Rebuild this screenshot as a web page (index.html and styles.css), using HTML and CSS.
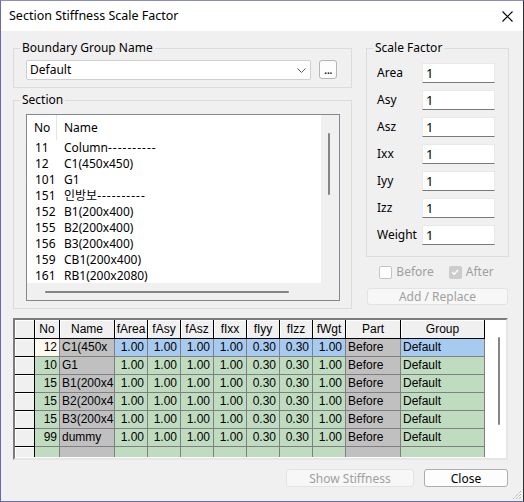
FILE: index.html
```html
<!DOCTYPE html>
<html>
<head>
	<meta charset="UTF-8">
	<title>Section Stiffness Scale Factor</title>
	<link rel="stylesheet" href="styles.css">
</head>
<body>
	<div class="win">
		<div class="titlebar">
			<span class="title">Section Stiffness Scale Factor</span>
			<svg class="close-x" width="11" height="11" viewBox="0 0 11 11"><path d="M0.5 0.5L10.5 10.5M10.5 0.5L0.5 10.5" stroke="#000" stroke-width="1.1" fill="none"/></svg>
		</div>
		<div class="content">
			<div class="top">
				<div class="leftcol">
					<fieldset class="group">
						<legend>Boundary Group Name</legend>
						<div class="gbody bnd">
							<div class="combo">
								<span>Default</span>
								<svg width="9" height="5" viewBox="0 0 9 5"><path d="M0.5 0.5L4.5 4.5L8.5 0.5" stroke="#5a5a5a" fill="none"/></svg>
							</div>
							<button class="more">...</button>
						</div>
					</fieldset>
					<fieldset class="group sect">
						<legend>Section</legend>
						<div class="gbody">
							<div class="listbox">
								<div class="listview">
									<div class="lhead"><span class="lno">No</span><span class="lname">Name</span></div>
									<div class="lrow"><span class="lno">11</span><span class="lname">Column<span class="dash">----------</span></span></div>
									<div class="lrow"><span class="lno">12</span><span class="lname">C1(450x450)</span></div>
									<div class="lrow"><span class="lno">101</span><span class="lname">G1</span></div>
									<div class="lrow"><span class="lno">151</span><span class="lname">인방보<span class="dash">----------</span></span></div>
									<div class="lrow"><span class="lno">152</span><span class="lname">B1(200x400)</span></div>
									<div class="lrow"><span class="lno">155</span><span class="lname">B2(200x400)</span></div>
									<div class="lrow"><span class="lno">156</span><span class="lname">B3(200x400)</span></div>
									<div class="lrow"><span class="lno">159</span><span class="lname">CB1(200x400)</span></div>
									<div class="lrow"><span class="lno">161</span><span class="lname">RB1(200x2080)</span></div>
								</div>
								<div class="vscroll"><i></i></div>
								<div class="hscroll"><i></i></div>
								<div class="corner"></div>
							</div>
						</div>
					</fieldset>
				</div>
				<div class="rightcol">
					<fieldset class="group">
						<legend>Scale Factor</legend>
						<div class="gbody factors">
							<div class="frow"><label>Area</label><input type="text" value="1"></div>
							<div class="frow"><label>Asy</label><input type="text" value="1"></div>
							<div class="frow"><label>Asz</label><input type="text" value="1"></div>
							<div class="frow"><label>Ixx</label><input type="text" value="1"></div>
							<div class="frow"><label>Iyy</label><input type="text" value="1"></div>
							<div class="frow"><label>Izz</label><input type="text" value="1"></div>
							<div class="frow"><label>Weight</label><input type="text" value="1"></div>
						</div>
					</fieldset>
					<div class="checks">
						<span class="chk"><i class="box"></i>Before</span>
						<span class="chk"><i class="box on"><svg width="10" height="10" viewBox="0 0 10 10"><path d="M2 5.2L4.2 7.3L8.2 2.8" stroke="#fff" stroke-width="1.3" fill="none"/></svg></i>After</span>
					</div>
					<button class="btn add" disabled>Add / Replace</button>
				</div>
			</div>
			<div class="gridbox">
				<div class="grid">
					<div class="grow ghead">
						<span></span><span>No</span><span>Name</span><span>fArea</span><span>fAsy</span><span>fAsz</span><span>fIxx</span><span>fIyy</span><span>fIzz</span><span>fWgt</span><span>Part</span><span>Group</span>
					</div>
					<div class="grow sel">
						<span class="rh"></span><span class="no">12</span><span class="nm">C1(450x</span><span>1.00</span><span>1.00</span><span>1.00</span><span>1.00</span><span>0.30</span><span>0.30</span><span>1.00</span><span class="pt">Before</span><span class="gp">Default</span>
					</div>
					<div class="grow">
						<span class="rh"></span><span class="no">10</span><span class="nm">G1</span><span>1.00</span><span>1.00</span><span>1.00</span><span>1.00</span><span>0.30</span><span>0.30</span><span>1.00</span><span class="pt">Before</span><span class="gp">Default</span>
					</div>
					<div class="grow">
						<span class="rh"></span><span class="no">15</span><span class="nm">B1(200x4</span><span>1.00</span><span>1.00</span><span>1.00</span><span>1.00</span><span>0.30</span><span>0.30</span><span>1.00</span><span class="pt">Before</span><span class="gp">Default</span>
					</div>
					<div class="grow">
						<span class="rh"></span><span class="no">15</span><span class="nm">B2(200x4</span><span>1.00</span><span>1.00</span><span>1.00</span><span>1.00</span><span>0.30</span><span>0.30</span><span>1.00</span><span class="pt">Before</span><span class="gp">Default</span>
					</div>
					<div class="grow">
						<span class="rh"></span><span class="no">15</span><span class="nm">B3(200x4</span><span>1.00</span><span>1.00</span><span>1.00</span><span>1.00</span><span>0.30</span><span>0.30</span><span>1.00</span><span class="pt">Before</span><span class="gp">Default</span>
					</div>
					<div class="grow">
						<span class="rh"></span><span class="no">99</span><span class="nm">dummy</span><span>1.00</span><span>1.00</span><span>1.00</span><span>1.00</span><span>0.30</span><span>0.30</span><span>1.00</span><span class="pt">Before</span><span class="gp">Default</span>
					</div>
					<div class="grow">
						<span class="rh"></span><span class="no"></span><span class="nm"></span><span></span><span></span><span></span><span></span><span></span><span></span><span></span><span class="pt"></span><span class="gp"></span>
					</div>
				</div>
				<div class="gscroll"><i></i></div>
			</div>
			<div class="bottom">
				<button class="btn" disabled>Show Stiffness</button>
				<button class="btn close-btn">Close</button>
			</div>
		</div>
		<svg class="grip" width="11" height="11" viewBox="0 0 11 11"><path d="M10 2L2 10M10 5L5 10M10 8L8 10" stroke="#a0a0a0" stroke-dasharray="1 1" fill="none"/></svg>
	</div>
</body>
</html>
```

FILE: styles.css
```css
*{margin: 0;padding: 0;box-sizing: border-box;}
body{background: #f0f0f0;font-family: "Noto Sans", "Noto Sans CJK KR", sans-serif;font-size: 12px;color: #000;}
.win{width: 524px;height: 502px;position: relative;background: #f0f0f0;border: 1px solid;border-color: #8c8cc0 #2e2e2e #6a6aa8 #6868b4;}

.titlebar{height: 30px;background: #fff;display: flex;align-items: center;justify-content: space-between;padding: 0 10px 0 8px;}
.title{font-size: 12.5px;line-height: 16px;}
.close-x{display: block;}

.content{padding: 9px 14px 0 12px;}
.top{display: flex;gap: 14px;}
.leftcol{width: 339px;}
.rightcol{width: 143px;display: flex;flex-direction: column;}

/* group boxes */
.group{border: 1px solid #dcdcdc;padding: 0;margin: 0;min-width: 0;}
.group legend{margin-left: 6px;padding: 0 2px;line-height: 16px;}
.sect{margin-top: 4px;}
.gbody{padding: 4px 11px 7px 12px;}
.sect .gbody{padding-top: 6px;}

.bnd{display: flex;gap: 8px;}
.combo{width: 285px;height: 20px;background: #fff;border: 1px solid #cfcfcf;border-radius: 2px;display: flex;align-items: center;justify-content: space-between;padding: 0 4px 0 3px;line-height: 16px;}
.more{width: 18px;height: 19px;background: #fdfdfd;border: 1px solid #b5b5b5;border-radius: 3px;font: inherit;line-height: 14px;text-align: center;letter-spacing: -0.5px;}

/* section list */
.listbox{width: 314px;height: 187px;border: 1px solid #828790;display: grid;grid-template-columns: 1fr 18px;grid-template-rows: 1fr 17px;}
.listview{background: #fff;overflow: hidden;}
.lhead{height: 25px;display: flex;align-items: center;}
.lhead .lno{border-right: 1px solid #e5e5e5;height: 25px;line-height: 25px;}
.lrow{height: 16px;line-height: 16px;display: flex;}
.lno{width: 30px;padding-left: 7px;}
.lrow .lno{padding-left: 8px;}
.lname{padding-left: 7px;white-space: nowrap;}
.dash{letter-spacing: 1px;}
.vscroll,.hscroll,.corner{background: #f0f0f0;}
.vscroll i{display: block;width: 2px;height: 62px;margin: 18px 0 0 7px;background: #858585;border-radius: 1px;}
.hscroll i{display: block;height: 2px;width: 244px;margin: 8px 0 0 18px;background: #858585;border-radius: 1px;}

/* scale factors */
.factors{padding: 7px 13px 11px 10px;display: flex;flex-direction: column;gap: 7px;}
.frow{display: flex;align-items: center;height: 20px;}
.frow label{width: 45px;line-height: 16px;}
.frow input{width: 73px;height: 20px;border: 1px solid #e8e8e8;border-bottom-color: #7a7a7a;background: #fff;font: 13px "Noto Sans", sans-serif;padding: 0 3px;outline: none;}

.checks{display: flex;justify-content: center;gap: 15px;margin-top: 7px;height: 16px;line-height: 16px;color: #a0a0a0;padding-right: 2px;}
.chk{display: flex;align-items: center;gap: 4px;}
.box{width: 13px;height: 13px;border: 1px solid #c4c4c4;border-radius: 2px;background: #fff;display: flex;align-items: center;justify-content: center;}
.box.on{background: #cccccc;border-color: #cccccc;}
.box svg{display: block;}

.btn{height: 18px;background: #fdfdfd;border: 1px solid #adadad;border-radius: 3px;font: inherit;line-height: 15px;color: #000;}
.btn:disabled{background: #f7f7f7;border-color: #e3e3e3;color: #a0a0a0;}
.add{margin: 8px 1px 0 1px;height: 17px;}

/* grid */
.gridbox{width: 495px;height: 142px;margin-top: 9px;background: #fff;border: 2px solid;border-color: #7c7c7c #e6e6e6 #e6e6e6 #7c7c7c;display: flex;}
.grid{width: 470px;height: 137px;overflow: hidden;font-family: "Liberation Sans", Arial, sans-serif;font-size: 12px;}
.grow{display: grid;grid-template-columns: 20px 25px 55px repeat(7, 33px) 55px 84px;height: 18px;}
.grow span{height: 18px;line-height: 17px;border-right: 1px solid #808080;border-bottom: 1px solid #808080;background: #c0dcc0;text-align: right;padding-right: 3px;white-space: nowrap;overflow: hidden;}
.grow span.nm,.grow span.pt,.grow span.gp{text-align: left;padding: 0 0 0 2px;}
.grow span.nm,.grow span.pt{background: #c0c0c0;}
.grow span.no{padding-right: 2px;}
.grow span.rh{background: #f0f0f0;border-color: #000;box-shadow: inset 1px 1px #fff;}
.sel span{background: #a6caf0;}
.sel span.no{background: #fffaf0;}
.ghead{height: 19px;}
.ghead span{height: 19px;line-height: 18px;background: #f0f0f0;border-color: #000;box-shadow: inset 1px 1px #fff;text-align: center;padding: 0;}
.gscroll{flex: 1;}
.gscroll i{display: block;width: 2px;height: 88px;margin: 17px 0 0 13px;background: #858585;border-radius: 1px;}

.bottom{display: flex;justify-content: flex-end;gap: 10px;margin-top: 9px;padding-right: 1px;}
.bottom .btn{width: 128px;}
.bottom .close-btn{width: 84px;}

.grip{position: absolute;right: 1px;bottom: 1px;}
```
